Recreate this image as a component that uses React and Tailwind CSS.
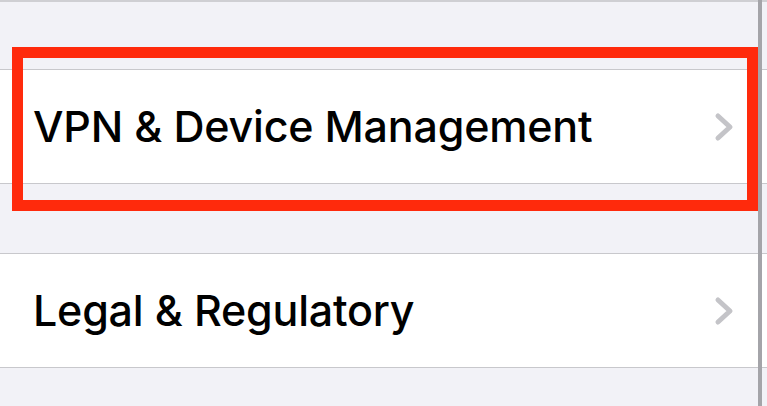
const Chevron = () => (
  <svg width="20" height="30" viewBox="0 0 20 30" fill="none">
    <polyline points="4,4 16,15 4,26" stroke="#c4c4c8" strokeWidth="5" strokeLinecap="round" strokeLinejoin="round" />
  </svg>
);

const Row = ({ label }) => (
  <div className="flex h-[115px] items-center justify-between border-y border-[#c8c8cc] bg-white pl-[33px] pr-[33px]">
    <span className="text-[43px] font-medium tracking-[-0.2px] text-black">{label}</span>
    <Chevron />
  </div>
);

export default function App() {
  return (
    <div
      className="relative h-[406px] w-[767px] overflow-hidden bg-[#f2f2f7]"
      style={{ fontFamily: 'Inter, "Noto Sans", sans-serif' }}
    >
      <div className="flex flex-col">
        <div className="h-[69px] border-t-2 border-[#cfcfd3]" />
        <Row label="VPN & Device Management" />
        <div className="h-[69px]" />
        <Row label="Legal & Regulatory" />
      </div>

      {/* red highlight box */}
      <div className="absolute left-[12px] top-[47px] h-[164px] w-[746px] border-[11px] border-[#ff2a0c]" />

      {/* right edge line */}
      <div className="absolute right-[5px] top-0 h-full w-[4px] bg-[#a4a4a9]" />
    </div>
  );
}
